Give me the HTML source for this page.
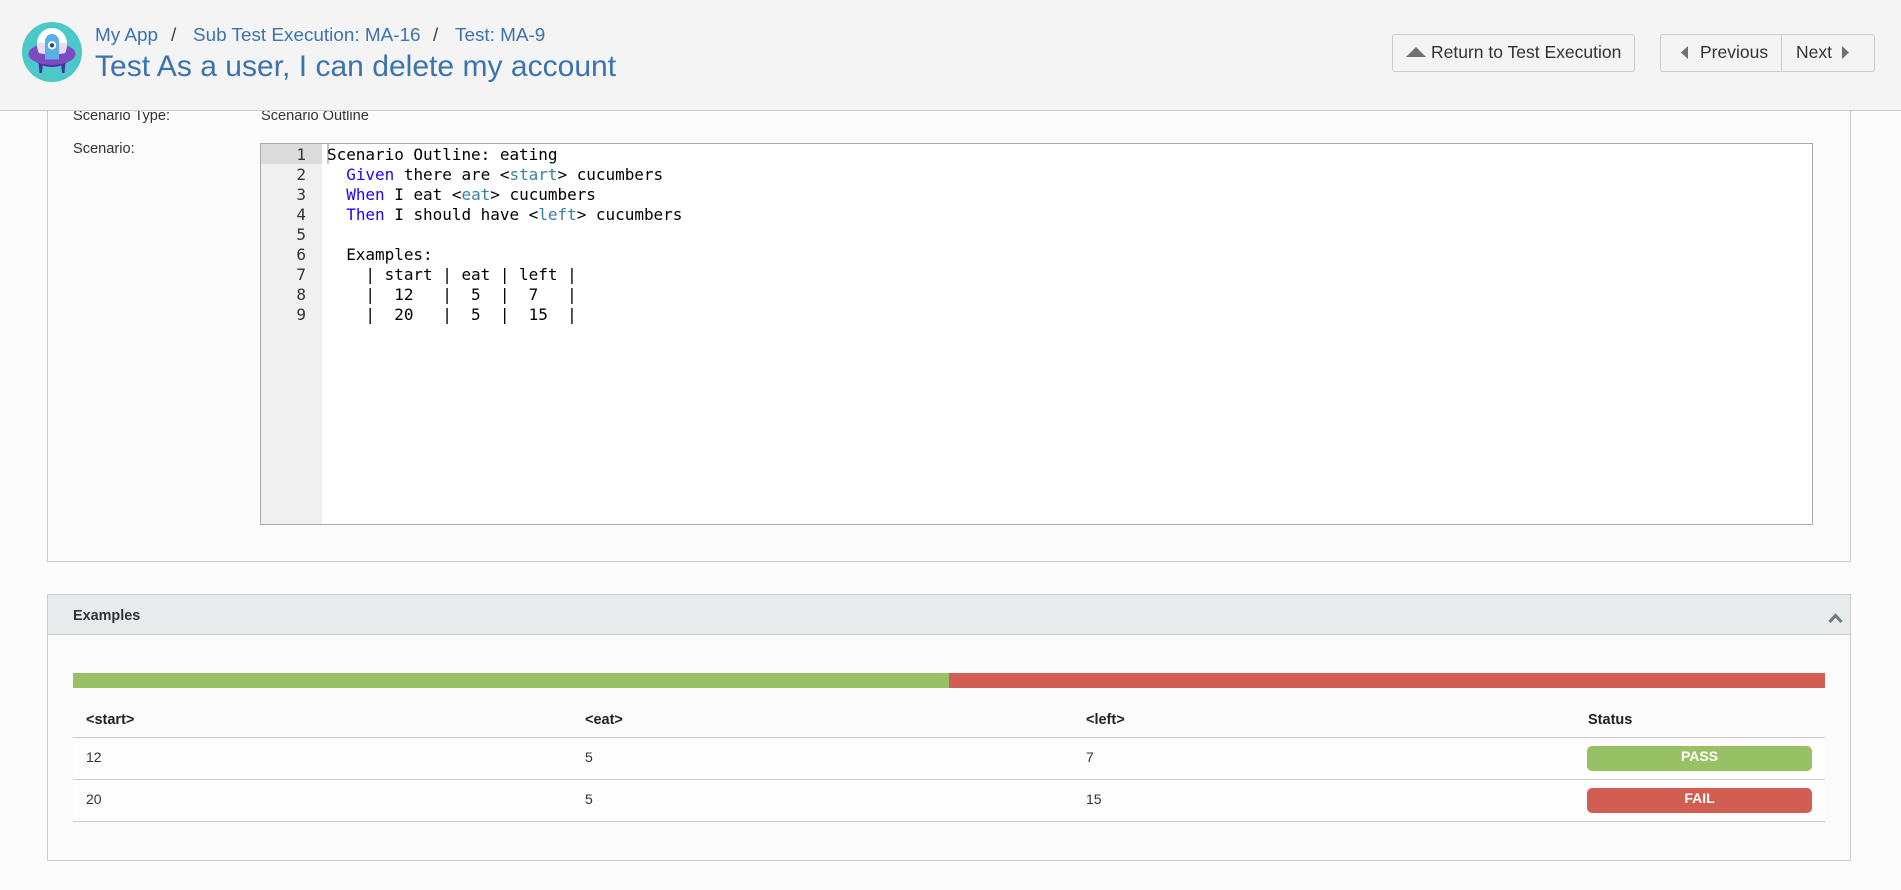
<!DOCTYPE html>
<html><head><meta charset="utf-8"><title>Test</title>
<style>
html,body{margin:0;padding:0;width:1901px;height:890px;overflow:hidden;background:#fcfcfc;font-family:"Liberation Sans",Arial,sans-serif;color:#333;}
.a{position:absolute;white-space:pre;}
.line{position:absolute;}
#hdr{position:absolute;left:0;top:0;width:1901px;height:110px;background:#f4f4f4;border-bottom:1px solid #ccc;z-index:5;}
.btn{position:absolute;top:34px;height:36px;border:1px solid #ccc;background:#f4f4f4;box-sizing:content-box;}
.code{position:absolute;left:327px;white-space:pre;font:16px/20px "DejaVu Sans Mono",monospace;letter-spacing:-0.03px;color:#000;height:20px;}
.num{position:absolute;left:262px;width:44px;text-align:right;font:16px/20px "DejaVu Sans Mono",monospace;color:#333;height:20px;}
.k{color:#2200ff}.v{color:#3a80a0}
.td{font-size:14px;line-height:16px;color:#333}
.lb{font-size:14.6px;line-height:16px;color:#333}
.th{font-size:14.5px;line-height:16px;font-weight:bold;color:#222}
.bc{font-size:18.9px;line-height:21px;color:#3b73af}
.bt{font-size:17.5px;line-height:20px;color:#333}
</style></head><body>
<div id="hdr">
<svg style="position:absolute;left:22px;top:22px" width="60" height="60" viewBox="22 22 60 60">
<circle cx="52" cy="52" r="30" fill="#4cc8c8"/>
<path d="M38.500 62h4.500l-1 11h-2.500zM61 62h4.500l-1 11H62z" fill="#4a2fa5"/>
<ellipse cx="52" cy="55.500" rx="19" ry="11.500" fill="#4a2fa5"/>
<ellipse cx="52" cy="54" rx="23.500" ry="11" fill="#7e4abf"/>
<path d="M37 43.500a15 15.500 0 0 1 30 0C67 48 66 51 65 53C60 54.500 44 54.500 39 53C38 51 37 48 37 43.500z" fill="#fff"/>
<path d="M37 43H67C67 48 66 51 65 53C60 54.500 44 54.500 39 53C38 51 37 48 37 43z" fill="#e6ddf4"/>
<path d="M45 59.500V41a7 7 0 0 1 14 0V59.500z" fill="#5ab0e6"/>
<circle cx="52" cy="45.300" r="4.200" fill="#fff"/>
<circle cx="52" cy="45.300" r="2.200" fill="#1f4a78"/>
</svg>
<div class="a bc" style="left:95px;top:25px">My App</div>
<div class="a bc" style="left:171px;top:25px;color:#444">/</div>
<div class="a bc" style="left:193px;top:25px">Sub Test Execution: MA-16</div>
<div class="a bc" style="left:433px;top:25px;color:#444">/</div>
<div class="a bc" style="left:455px;top:25px">Test: MA-9</div>
<div class="a" style="left:95px;top:50px;font-size:30.05px;line-height:34px;color:#3b73af">Test As a user, I can delete my account</div>
<div class="btn" style="left:1392px;width:241px;border-radius:3px"></div>
<svg style="position:absolute;left:1406px;top:47px" width="20" height="10"><path d="M0 10L10 0L20 10z" fill="#707070"/></svg>
<div class="a bt" style="left:1431px;top:42px">Return to Test Execution</div>
<div class="btn" style="left:1660px;width:120px;border-radius:3px 0 0 3px"></div>
<div class="btn" style="left:1781px;width:92px;border-radius:0 3px 3px 0"></div>
<svg style="position:absolute;left:1681px;top:46px" width="7" height="13"><path d="M7 0V13L0 6.500z" fill="#707070"/></svg>
<div class="a bt" style="left:1700px;top:42px">Previous</div>
<div class="a bt" style="left:1796px;top:42px">Next</div>
<svg style="position:absolute;left:1842px;top:46px" width="7" height="13"><path d="M0 0V13L7 6.500z" fill="#707070"/></svg>
</div>

<!-- panel 1 -->
<div class="line" style="left:47px;top:100px;width:1802px;height:461px;border:1px solid #ccc;border-top:0;background:#fbfbfb"></div>
<div class="a lb" style="left:73px;top:108px">Scenario Type:</div>
<div class="a lb" style="left:261px;top:108px">Scenario Outline</div>
<div class="a lb" style="left:73px;top:141px">Scenario:</div>
<!-- editor -->
<div class="line" style="left:260px;top:143px;width:1551px;height:380px;border:1px solid #aaa;background:#fff"></div>
<div class="line" style="left:261px;top:144px;width:61px;height:380px;background:#f0f0f0"></div>
<div class="line" style="left:261px;top:144px;width:61px;height:20px;background:#dcdcdc"></div>
<div class="line" style="left:327px;top:144px;width:2px;height:20px;background:#c4c4c4"></div>
<div class="num" style="top:144.500px">1</div>
<div class="num" style="top:164.500px">2</div>
<div class="num" style="top:184.500px">3</div>
<div class="num" style="top:204.500px">4</div>
<div class="num" style="top:224.500px">5</div>
<div class="num" style="top:244.500px">6</div>
<div class="num" style="top:264.500px">7</div>
<div class="num" style="top:284.500px">8</div>
<div class="num" style="top:304.500px">9</div>
<div class="code" style="top:144.500px">Scenario Outline: eating</div>
<div class="code" style="top:164.500px">  <span class="k">Given</span> there are &lt;<span class="v">start</span>&gt; cucumbers</div>
<div class="code" style="top:184.500px">  <span class="k">When</span> I eat &lt;<span class="v">eat</span>&gt; cucumbers</div>
<div class="code" style="top:204.500px">  <span class="k">Then</span> I should have &lt;<span class="v">left</span>&gt; cucumbers</div>
<div class="code" style="top:244.500px">  Examples:</div>
<div class="code" style="top:264.500px">    | start | eat | left |</div>
<div class="code" style="top:284.500px">    |  12   |  5  |  7   |</div>
<div class="code" style="top:304.500px">    |  20   |  5  |  15  |</div>

<!-- panel 2 -->
<div class="line" style="left:47px;top:594px;width:1802px;height:265px;border:1px solid #ccc;background:#fbfbfb"></div>
<div class="line" style="left:48px;top:595px;width:1802px;height:39px;background:#e8ebec;border-bottom:1px solid #ccc"></div>
<div class="a" style="left:73px;top:607.500px;font-size:14.4px;line-height:17px;font-weight:bold;color:#333">Examples</div>
<svg style="position:absolute;left:1828px;top:612px" width="15" height="12"><path d="M1.500 10L7.500 3.500L13.500 10" fill="none" stroke="#777" stroke-width="3"/></svg>
<div class="line" style="left:73px;top:673px;width:876px;height:15px;background:#98c165"></div>
<div class="line" style="left:949px;top:673px;width:876px;height:15px;background:#d25d52"></div>
<div class="line" style="left:73px;top:737px;width:1752px;height:84px;background:#fdfdfd"></div>
<div class="line" style="left:73px;top:737px;width:1752px;height:1px;background:#ccc"></div>
<div class="line" style="left:73px;top:779px;width:1752px;height:1px;background:#ccc"></div>
<div class="line" style="left:73px;top:821px;width:1752px;height:1px;background:#ccc"></div>
<div class="a th" style="left:86px;top:712px">&lt;start&gt;</div>
<div class="a th" style="left:585px;top:712px">&lt;eat&gt;</div>
<div class="a th" style="left:1086px;top:712px">&lt;left&gt;</div>
<div class="a th" style="left:1588px;top:712px">Status</div>
<div class="a td" style="left:86px;top:749px">12</div>
<div class="a td" style="left:585px;top:749px">5</div>
<div class="a td" style="left:1086px;top:749px">7</div>
<div class="a td" style="left:86px;top:791px">20</div>
<div class="a td" style="left:585px;top:791px">5</div>
<div class="a td" style="left:1086px;top:791px">15</div>
<div class="line" style="left:1587px;top:746px;width:225px;height:25px;background:#98c165;border-radius:5px"></div>
<div class="a" style="left:1587px;top:748px;width:225px;text-align:center;font-size:14px;line-height:17px;font-weight:bold;color:#fff">PASS</div>
<div class="line" style="left:1587px;top:788px;width:225px;height:25px;background:#d25d52;border-radius:5px"></div>
<div class="a" style="left:1587px;top:790px;width:225px;text-align:center;font-size:14px;line-height:17px;font-weight:bold;color:#fff">FAIL</div>
</body></html>
